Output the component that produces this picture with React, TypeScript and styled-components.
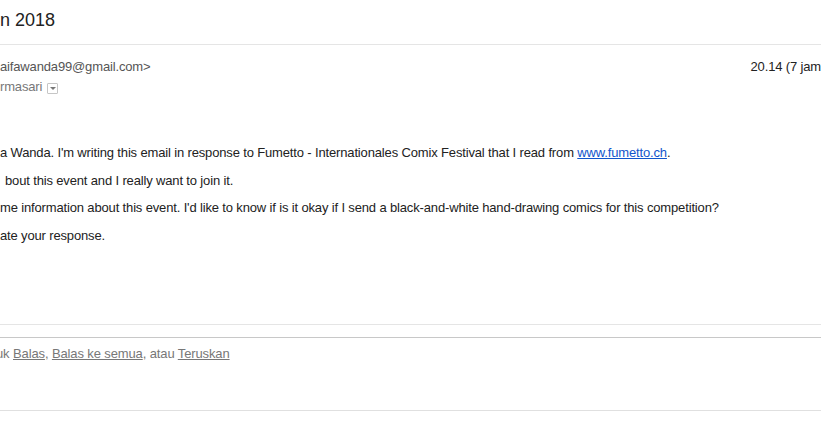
import React from 'react';
import styled, { createGlobalStyle } from 'styled-components';

const Global = createGlobalStyle`
  html, body {
    margin: 0;
    padding: 0;
    background: #fff;
  }
  body {
    font-family: "Liberation Sans", Arial, sans-serif;
    color: #222;
  }
`;

const Page = styled.div`
  width: 821px;
  height: 431px;
  overflow: hidden;
  display: flex;
  flex-direction: column;
`;

const SubjectBar = styled.div`
  height: 45px;
  box-sizing: border-box;
  border-bottom: 1px solid #e5e5e5;
  padding-top: 8px;
  font-size: 18px;
  line-height: 24px;
  color: #222;
  white-space: nowrap;
`;

const Header = styled.div`
  padding-top: 12px;
  display: flex;
  justify-content: space-between;
  font-size: 13px;
  letter-spacing: -0.15px;
  line-height: 20px;
  white-space: nowrap;
`;

const Sender = styled.div`
  display: flex;
  flex-direction: column;
`;

const SenderMail = styled.span`
  color: #555;
`;

const Recipient = styled.span`
  color: #777;
  display: flex;
  align-items: center;
  gap: 5px;
`;

const DropButton = styled.span`
  width: 11px;
  height: 11px;
  box-sizing: border-box;
  border: 1px solid #c6c6c6;
  border-radius: 1px;
  display: inline-flex;
  align-items: center;
  justify-content: center;
  margin-top: 2px;
  &::after {
    content: '';
    border-left: 3px solid transparent;
    border-right: 3px solid transparent;
    border-top: 3px solid #777;
  }
`;

const DateText = styled.span`
  color: #222;
  margin-right: 0;
`;

const Body = styled.div`
  padding-top: 42px;
  height: 149px;
  font-size: 13px;
  letter-spacing: -0.15px;
  line-height: 27.67px;
  color: #222;
  white-space: nowrap;
`;

const Line = styled.div<{ $indent?: number }>`
  padding-left: ${p => p.$indent ?? 0}px;
`;

const Link = styled.a<{ $muted?: boolean }>`
  color: ${p => (p.$muted ? '#777' : '#15c')};
  text-decoration: underline;
`;

const Rule = styled.div<{ $color: string; $gap: number }>`
  height: 1px;
  background: ${p => p.$color};
  margin-top: ${p => p.$gap}px;
`;

const Footer = styled.div`
  padding-top: 6px;
  height: 66px;
  font-size: 13px;
  letter-spacing: -0.12px;
  line-height: 20px;
  color: #777;
  white-space: nowrap;
  margin-left: -4px;
`;

export default function App() {
  return (
    <Page>
      <Global />
      <SubjectBar>n 2018</SubjectBar>
      <Header>
        <Sender>
          <SenderMail>aifawanda99@gmail.com&gt;</SenderMail>
          <Recipient>
            rmasari <DropButton />
          </Recipient>
        </Sender>
        <DateText>20.14 (7 jam</DateText>
      </Header>
      <Body>
        <Line>
          a Wanda. I'm writing this email in response to Fumetto - Internationales Comix Festival that I read from{' '}
          <Link href="#">www.fumetto.ch</Link>.
        </Line>
        <Line $indent={5}>bout this event and I really want to join it.</Line>
        <Line>
          me information about this event. I'd like to know if is it okay if I send a black-and-white hand-drawing comics for this competition?
        </Line>
        <Line>ate your response.</Line>
      </Body>
      <Rule $color="#e5e5e5" $gap={36} />
      <Rule $color="#c8c8c8" $gap={12} />
      <Footer>
        uk <Link $muted href="#">Balas</Link>, <Link $muted href="#">Balas ke semua</Link>, atau{' '}
        <Link $muted href="#">Teruskan</Link>
      </Footer>
      <Rule $color="#e0e0e0" $gap={0} />
    </Page>
  );
}
